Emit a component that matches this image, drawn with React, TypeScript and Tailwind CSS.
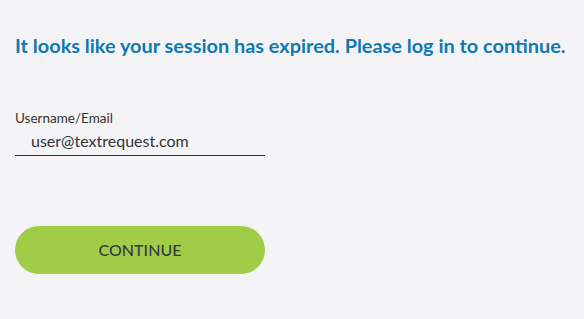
export default function App() {
  return (
    <div className="min-h-[319px] w-full bg-[#f4f4f6] px-[15px] pt-[33px] font-['Lato','Liberation_Sans',sans-serif]">
      <h1 className="text-[19.9px] font-bold leading-[24px] text-[#0e79b2]">
        It looks like your session has expired. Please log in to continue.
      </h1>
      <div className="mt-[53px] w-[250px]">
        <label className="block text-[13.5px] leading-[16px] text-[#333]">Username/Email</label>
        <div className="border-b border-[#333640] pb-[4px] pl-[16px] pt-[5px] text-[16px] leading-[20px] text-[#333]">
          user@textrequest.com
        </div>
      </div>
      <button className="mt-[70px] flex h-[48px] w-[250px] items-center justify-center rounded-full bg-[#a0cd48] text-[16px] font-medium text-[#363944]">
        CONTINUE
      </button>
    </div>
  );
}
